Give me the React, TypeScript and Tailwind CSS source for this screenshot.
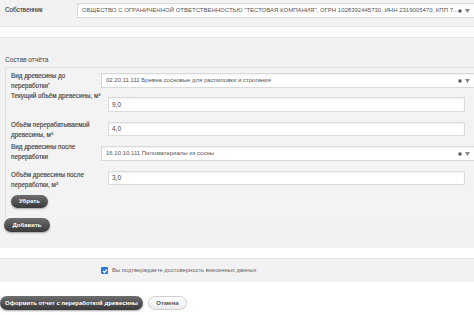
import React from "react";

const FONT = { fontFamily: '"Liberation Sans", Arial, sans-serif' };

function Arrows() {
  return (
    <span className="flex items-center gap-[3px] pr-[4px]">
      <svg width="4" height="4" viewBox="0 0 4 4">
        <rect x="0.5" y="0.5" width="3" height="3" fill="#555" />
      </svg>
      <svg width="5" height="4" viewBox="0 0 5 4">
        <path d="M0 0 L5 0 L2.5 4 Z" fill="#888" />
      </svg>
    </span>
  );
}

function Select({ value, className = "" }: { value: string; className?: string }) {
  return (
    <div
      className={
        "flex h-[15px] flex-1 items-center justify-between border-y border-l border-[#d9d9d9] bg-white pl-[4px] text-[6px] text-[#555] shadow-[inset_0_1px_2px_rgba(0,0,0,0.06)] " +
        className
      }
    >
      <span className="truncate whitespace-nowrap">{value}</span>
      <Arrows />
    </div>
  );
}

function Input({ value, className = "" }: { value: string; className?: string }) {
  return (
    <div
      className={
        "ml-[7px] flex w-[357px] items-center border border-[#dcdcdc] bg-white pl-[3px] text-[6.5px] text-[#444] shadow-[inset_0_1px_2px_rgba(0,0,0,0.07)] " +
        className
      }
    >
      {value}
    </div>
  );
}

function Label({ children }: { children: React.ReactNode }) {
  return (
    <div className="w-[90px] shrink-0 whitespace-nowrap text-[6.3px] leading-[10px] text-[#444] [-webkit-text-stroke:0.15px_#444]">
      {children}
    </div>
  );
}

function DarkButton({ children, className = "" }: { children: React.ReactNode; className?: string }) {
  return (
    <div
      className={
        "flex items-center justify-center rounded-full bg-gradient-to-b from-[#6e6e6e] to-[#3a3a3a] text-[6px] font-bold text-white shadow-[0_1px_2px_rgba(0,0,0,0.35)] " +
        className
      }
    >
      {children}
    </div>
  );
}

export default function App() {
  return (
    <div className="h-[315px] w-[474px] overflow-hidden bg-white" style={FONT}>
      {/* owner */}
      <div className="flex h-[27px] border-b border-[#e4e4e4] bg-[#f2f2f2]">
        <div className="w-[100px] pl-[5px] pt-[5px] text-[6.3px] text-[#444] [-webkit-text-stroke:0.15px_#444]">
          Собственник
        </div>
        <Select
          className="mt-[3px]"
          value={'ОБЩЕСТВО С ОГРАНИЧЕННОЙ ОТВЕТСТВЕННОСТЬЮ "ТЕСТОВАЯ КОМПАНИЯ", ОГРН 1028392445730, ИНН 2319005470, КПП 7...'}
        />
      </div>

      <div className="h-[10px]" />

      {/* report contents */}
      <div className="h-[211px] border-t border-[#e4e4e4] bg-[#f2f2f2]">
        <div className="h-[29px] pl-[5px] pt-[17px] text-[6.5px] text-[#444]">Состав отчёта</div>
        <div className="ml-[5px] border-t border-l border-[#e2e2e2] bg-[#f3f3f3] pl-[5px] pt-[3px]">
          <div className="flex h-[20px] items-start">
            <Label>
              Вид древесины до
              <br />
              переработки<sup className="text-[4px]">*</sup>
            </Label>
            <Select className="mt-[2px]" value="02.20.11.111 Бревна сосновые для распиловки и строгания" />
          </div>
          <div className="flex h-[29px] items-start">
            <Label>
              Текущий объём древесины, м<sup className="text-[4px]">3</sup>
            </Label>
            <Input className="mt-[6px] h-[15px]" value="9,0" />
          </div>
          <div className="flex h-[22px] items-start">
            <Label>
              Объём перерабатываемой
              <br />
              древесины, м<sup className="text-[4px]">3</sup>
            </Label>
            <Input className="mt-[2px] h-[14px]" value="4,0" />
          </div>
          <div className="flex h-[28px] items-start">
            <Label>
              Вид древесины после
              <br />
              переработки
            </Label>
            <Select className="mt-[4px]" value="16.10.10.111 Пиломатериалы из сосны" />
          </div>
          <div className="flex h-[25px] items-start">
            <Label>
              Объём древесины после
              <br />
              переработки, м<sup className="text-[4px]">3</sup>
            </Label>
            <Input className="mt-[1px] h-[14px]" value="3,0" />
          </div>
          <div className="h-[23px]">
            <DarkButton className="h-[13px] w-[37px]">Убрать</DarkButton>
          </div>
        </div>
        <div className="pl-[4px]">
          <DarkButton className="h-[14px] w-[46px]">Добавить</DarkButton>
        </div>
      </div>

      <div className="h-[10px]" />

      {/* confirmation */}
      <div className="flex h-[24px] items-center border-t border-[#e4e4e4] bg-[#f2f2f2] pl-[101px]">
        <div className="flex h-[7px] w-[7px] items-center justify-center rounded-[1px] bg-[#2f78d6]">
          <svg width="6" height="6" viewBox="0 0 6 6">
            <path d="M1 3 L2.5 4.5 L5 1.5" stroke="white" strokeWidth="1.2" fill="none" />
          </svg>
        </div>
        <span className="ml-[4px] text-[5.8px] text-[#666]">
          Вы подтверждаете достоверность внесенных данных
        </span>
      </div>

      {/* actions */}
      <div className="flex gap-[5px] pt-[14px]">
        <DarkButton className="h-[14px] w-[143px]">
          Оформить отчет с переработкой древесины
        </DarkButton>
        <div className="flex h-[14px] w-[39px] items-center justify-center rounded-full border border-[#d0d0d0] bg-gradient-to-b from-white to-[#ececec] text-[6px] font-bold text-[#555]">
          Отмена
        </div>
      </div>
    </div>
  );
}
